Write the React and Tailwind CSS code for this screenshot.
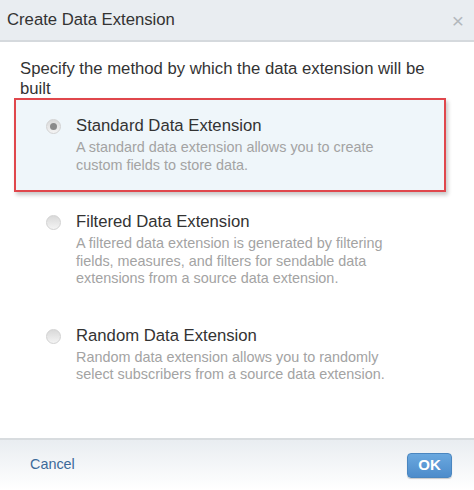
import { useState } from "react";

const opcoes = [
  {
    id: "standard",
    titulo: "Standard Data Extension",
    descricao: ["A standard data extension allows you to create", "custom fields to store data."],
  },
  {
    id: "filtered",
    titulo: "Filtered Data Extension",
    descricao: [
      "A filtered data extension is generated by filtering",
      "fields, measures, and filters for sendable data",
      "extensions from a source data extension.",
    ],
  },
  {
    id: "random",
    titulo: "Random Data Extension",
    descricao: ["Random data extension allows you to randomly", "select subscribers from a source data extension."],
  },
];

function Radio({ marcado }) {
  return (
    <span className="mt-[3px] flex h-[15px] w-[15px] shrink-0 items-center justify-center rounded-full border border-[#d2d2d2] bg-gradient-to-b from-[#d9d9d9] to-[#f4f4f4]">
      {marcado && <span className="h-[7px] w-[7px] rounded-full bg-[#8a8a8a]" />}
    </span>
  );
}

function Opcao({ opcao, marcado, onClick }) {
  return (
    <div onClick={onClick} className="flex cursor-pointer gap-[15px]">
      <Radio marcado={marcado} />
      <div>
        <p className="text-[16.7px] leading-[20px] text-[#333]">{opcao.titulo}</p>
        <p className="mt-[3px] text-[14.4px] leading-[17.5px] text-[#a3a3a3]">
          {opcao.descricao.map((l) => (
            <span key={l} className="block">
              {l}
            </span>
          ))}
        </p>
      </div>
    </div>
  );
}

export default function App() {
  const [selecionado, setSelecionado] = useState("standard");

  return (
    <div className="flex h-[490px] w-[474px] flex-col bg-white font-['Liberation_Sans',Arial,sans-serif]">
      <div className="flex h-[42px] shrink-0 items-center justify-between border-b-2 border-[#d5d9dd] bg-[#e9edf1] pl-[7px] pr-[10px]">
        <h2 className="text-[16.7px] text-[#333]">Create Data Extension</h2>
        <span className="text-[21px] leading-none text-[#b3b8bd]">×</span>
      </div>

      <div className="flex-1">
        <p className="pl-[20px] pt-[17px] text-[16.7px] leading-[20px] text-[#333]">
          Specify the method by which the data extension will be
          <br />
          built
        </p>

        <div className="ml-[14px] mt-[-1px] w-[432px] border-2 border-[#e0474c] bg-[#eff6fa] pb-[16px] pl-[30px] pt-[16px] shadow-[2px_3px_4px_rgba(0,0,0,0.22)]">
          <Opcao opcao={opcoes[0]} marcado={selecionado === "standard"} onClick={() => setSelecionado("standard")} />
        </div>

        <div className="pl-[46px] pt-[20px]">
          <Opcao opcao={opcoes[1]} marcado={selecionado === "filtered"} onClick={() => setSelecionado("filtered")} />
        </div>

        <div className="pl-[46px] pt-[38px]">
          <Opcao opcao={opcoes[2]} marcado={selecionado === "random"} onClick={() => setSelecionado("random")} />
        </div>
      </div>

      <div className="flex h-[52px] shrink-0 items-center justify-between border-t-2 border-[#d8dcdf] bg-gradient-to-b from-[#e9edf1] to-[#ffffff] pl-[30px] pr-[22px]">
        <button className="text-[14.4px] text-[#3d6a9a]">Cancel</button>
        <button className="h-[25px] w-[45px] rounded-[4px] border border-[#4a86c0] bg-gradient-to-b from-[#6aa8df] to-[#4d8ccb] text-[15px] font-bold text-white shadow-[0_1px_1px_rgba(0,0,0,0.2)]">
          OK
        </button>
      </div>
    </div>
  );
}
